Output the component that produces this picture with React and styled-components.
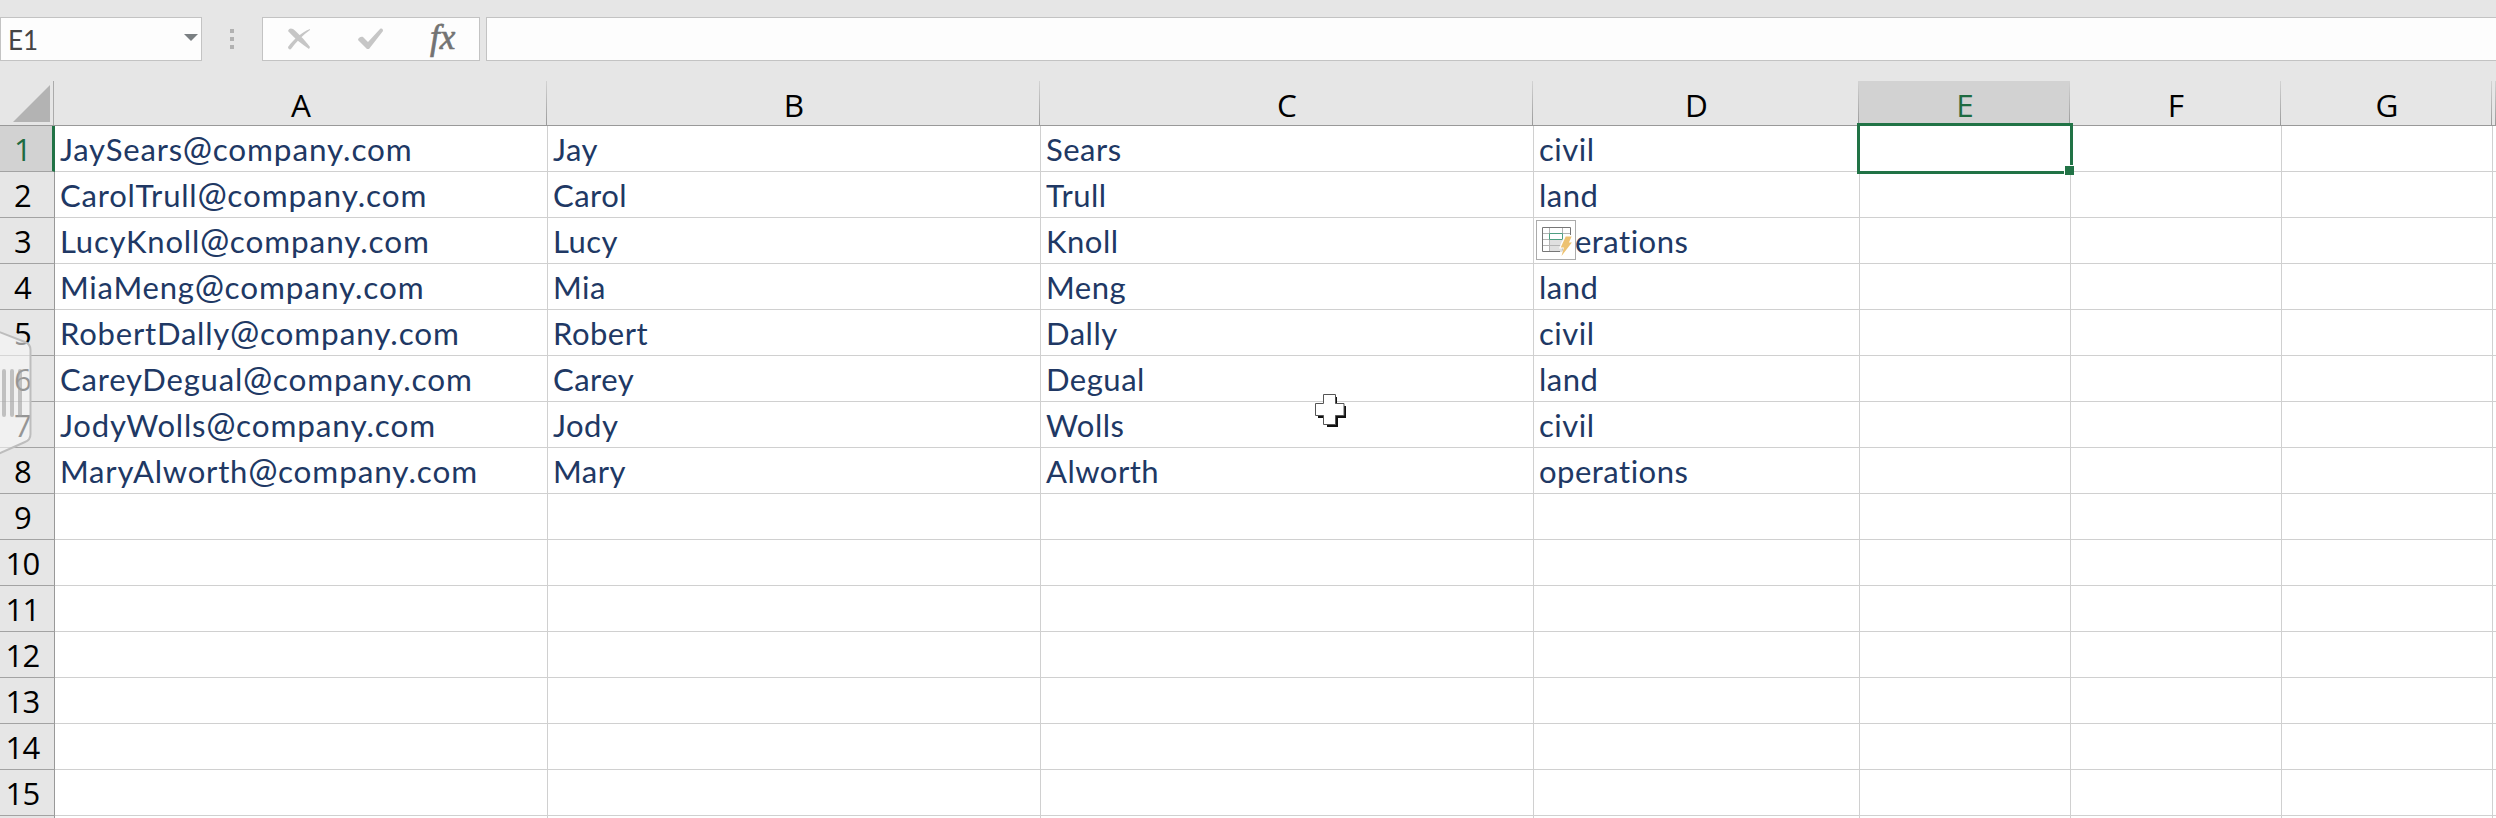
import styled, { createGlobalStyle } from 'styled-components';

const GlobalStyle = createGlobalStyle`
	* {
		box-sizing: border-box;
	}

	body {
		margin: 0;
		background: #e6e6e6;
		overflow: hidden;
	}
`;

const columns = [
	{ name: 'A', width: 493 },
	{ name: 'B', width: 493 },
	{ name: 'C', width: 493 },
	{ name: 'D', width: 326 },
	{ name: 'E', width: 211 },
	{ name: 'F', width: 211 },
	{ name: 'G', width: 211 },
	{ name: '', width: 4 },
];

const people = [
	['JaySears@company.com', 'Jay', 'Sears', 'civil'],
	['CarolTrull@company.com', 'Carol', 'Trull', 'land'],
	['LucyKnoll@company.com', 'Lucy', 'Knoll', 'operations'],
	['MiaMeng@company.com', 'Mia', 'Meng', 'land'],
	['RobertDally@company.com', 'Robert', 'Dally', 'civil'],
	['CareyDegual@company.com', 'Carey', 'Degual', 'land'],
	['JodyWolls@company.com', 'Jody', 'Wolls', 'civil'],
	['MaryAlworth@company.com', 'Mary', 'Alworth', 'operations'],
];

const rows = Array.from({ length: 15 }, (_, index) => index);
const active = { row: 0, column: 4 };

const Window = styled.div`
	position: relative;
	width: 2496px;
	height: 818px;
	overflow: hidden;
	background: #e6e6e6;
	font-family: 'Open Sans', 'Noto Sans', sans-serif;
`;

const FormulaBar = styled.div`
	display: flex;
	height: 81px;
	padding-top: 17px;
`;

const Box = styled.div`
	display: flex;
	align-items: center;
	height: 44px;
	border: 1px solid #c3c3c3;
	background: #fdfdfd;
`;

const NameBox = styled(Box)`
	width: 202px;
	justify-content: space-between;
	padding: 2px 3px 0 7px;
	font-family: Lato, sans-serif;
	font-size: 26px;
	color: #444;

	svg {
		margin-bottom: 5px;
	}
`;

const Dots = styled.div`
	display: flex;
	flex-direction: column;
	gap: 4px;
	width: 60px;
	padding: 12px 0 0 28px;
`;

const Dot = styled.span`
	width: 4px;
	height: 4px;
	background: #b1b1b1;
`;

const Actions = styled(Box)`
	width: 218px;
	margin-right: 6px;
	padding-left: 25px;
`;

const CheckIcon = styled.svg`
	margin-left: 47px;
`;

const Fx = styled.span`
	margin: -3px 0 0 46px;
	font-family: 'Liberation Serif', serif;
	font-style: italic;
	font-size: 35px;
	line-height: 40px;
	color: #737373;
	-webkit-text-stroke: 0.7px #737373;
`;

const Input = styled(Box)`
	flex: 1;
	border-right: 0;
`;

const Header = styled.div`
	display: flex;
	height: 45px;
	border-bottom: 1px solid #999;
`;

const Corner = styled.div`
	display: flex;
	justify-content: flex-end;
	width: 55px;
	padding: 4px 3px 0 0;
	border-right: 1px solid #ababab;
`;

const ColumnName = styled.div`
	flex: none;
	width: ${({ $width }) => $width}px;
	padding-left: 2px;
	line-height: 48px;
	text-align: center;
	font-size: 31.5px;
	color: ${({ $active }) => ($active ? '#1e6b41' : '#000')};
	background: ${({ $active }) => ($active ? '#d2d2d2' : '#e6e6e6')};
	border-right: 1px solid;
	border-image: linear-gradient(#d4d4d4, #999) 1;
`;

const Row = styled.div`
	display: flex;
	height: 46px;
`;

const RowName = styled.div`
	flex: none;
	width: 55px;
	padding-right: ${({ $active }) => ($active ? 7 : 9)}px;
	line-height: 47px;
	text-align: center;
	font-size: 31px;
	letter-spacing: -0.8px;
	color: ${({ $active }) => ($active ? '#1e6b41' : '#000')};
	background: ${({ $active }) => ($active ? '#d2d2d2' : '#e6e6e6')};
	border-bottom: 1px solid #a3a3a3;
	border-right: ${({ $active }) => ($active ? '3px solid #217346' : '1px solid #999')};
`;

const Cell = styled.div`
	position: relative;
	flex: none;
	width: ${({ $width }) => $width}px;
	padding-left: 5px;
	line-height: 47px;
	white-space: nowrap;
	font-family: Lato, sans-serif;
	font-size: 31px;
	font-variant-ligatures: none;
	letter-spacing: 0.5px;
	color: #203864;
	background: #fff;
	border-right: 1px solid #d0d0d0;
	border-bottom: 1px solid #d0d0d0;
`;

const Login = styled.span`
	letter-spacing: 0.8px;
`;

const At = styled.span`
	font-size: 35px;
	letter-spacing: 0.5px;
	line-height: 1;
`;

const Domain = styled.span`
	font-size: 31.5px;
	letter-spacing: 0.9px;
	line-height: 1;
`;

const Selection = styled.div`
	position: absolute;
	z-index: 1;
	top: -3px;
	left: -3px;
	width: 216px;
	height: 51px;
	border: 3px solid #217346;

	&::after {
		content: '';
		position: absolute;
		right: -4px;
		bottom: -4px;
		width: 9px;
		height: 9px;
		background: #217346;
		border-top: 1px solid #fff;
		border-left: 1px solid #fff;
	}
`;

const FlashFill = styled.div`
	position: absolute;
	top: 2px;
	left: 2px;
	width: 40px;
	height: 40px;
	border: 1px solid #ababab;
	background: #fff;

	svg {
		display: block;
	}
`;

const PanelHandle = styled.svg`
	position: absolute;
	left: 0;
	top: 328px;
`;

const Cursor = styled.svg`
	position: absolute;
	left: 1312px;
	top: 391px;
`;

const FlashFillButton = () => (
	<FlashFill>
		<svg width='38' height='38'>
			<path d='M12 18h14v13H12z' fill='#e0e0e0' />
			<path d='M6 12.5h27M6 18.5h27M6 24.5h22M12.5 7v23M25.5 7v23' fill='none' stroke='#b5b5b5' />
			<path d='M33.5 14V6.5h-28v24H23' fill='none' stroke='#777' />
			<path d='M12.5 12.5h13v6h-13z' fill='#fff' stroke='#4f9f82' />
			<path d='M27.500 14h8.500l-3 6.500h3.500L24 37l2-9.500h-4z' fill='#fff' />
			<path d='M28.700 15.500h6l-2.800 6h3L24.500 35l2.400-8.600h-3.200z' fill='#edc272' />
		</svg>
	</FlashFill>
);

const CellText = ({ text = '' }) => {
	const [login, domain] = text.split('@');

	if (!domain) {
		return text;
	}

	return (
		<>
			<Login>{login}</Login>
			<At>@</At>
			<Domain>{domain}</Domain>
		</>
	);
};

const App = () => (
	<>
		<GlobalStyle />
		<Window>
			<FormulaBar>
				<NameBox>
					E1
					<svg width='14' height='7'>
						<path d='M0 0h14l-7 7z' fill='#7a7f82' />
					</svg>
				</NameBox>
				<Dots>
					<Dot />
					<Dot />
					<Dot />
				</Dots>
				<Actions>
					<svg width='23' height='22'>
						<path
							d='M0 3C1 0 3 0 5 1c4 3 11 10 17 18l-1 2C14 16 7 11 0 3zM22 1v1C15 7 8 14 3 21c-1 1-3 0-3-2C6 11 14 4 22 1z'
							fill='#c6c6c6'
						/>
					</svg>
					<CheckIcon width='26' height='22'>
						<path d='M0 12c0-2 3-4 5-3l5 5L22 1c2-1 3 0 3 2L11 21H9z' fill='#c6c6c6' />
					</CheckIcon>
					<Fx>fx</Fx>
				</Actions>
				<Input />
			</FormulaBar>
			<Header>
				<Corner>
					<svg width='37' height='37'>
						<path d='M37 0v37H0z' fill='#b3b3b3' />
					</svg>
				</Corner>
				{columns.map(({ name, width }, index) => (
					<ColumnName key={index} $width={width} $active={index === active.column}>
						{name}
					</ColumnName>
				))}
			</Header>
			{rows.map((row) => (
				<Row key={row}>
					<RowName $active={row === active.row}>{row + 1}</RowName>
					{columns.map(({ width }, column) => (
						<Cell key={column} $width={width}>
							<CellText text={people[row]?.[column]} />
							{row === active.row && column === active.column && <Selection />}
							{row === 2 && column === 3 && <FlashFillButton />}
						</Cell>
					))}
				</Row>
			))}
			<Row>
				<RowName />
				{columns.map(({ width }, column) => (
					<Cell key={column} $width={width} />
				))}
			</Row>
			<PanelHandle width='34' height='130'>
				<path
					d='M-2 3.5L25 14q5.500 2 5.500 8v84q0 6-5.500 8L-2 126z'
					fill='rgba(248, 248, 248, 0.6)'
					stroke='#bdbdbd'
					strokeWidth='2'
				/>
				<path
					d='M4 43v44M12 43v44M20 43v44'
					stroke='rgba(160, 160, 160, 0.6)'
					strokeWidth='4'
					strokeLinecap='round'
				/>
			</PanelHandle>
			<Cursor width='38' height='38'>
				<path d='M13 6h12v9h9v12h-8v9H15v-9H6V15h7z' fill='#111' />
				<path d='M11.500 3.500h12v9h8.500v12h-8.500v9h-12v-9H3.500v-12h8z' fill='#fff' stroke='#555' />
			</Cursor>
		</Window>
	</>
);

export default App;
